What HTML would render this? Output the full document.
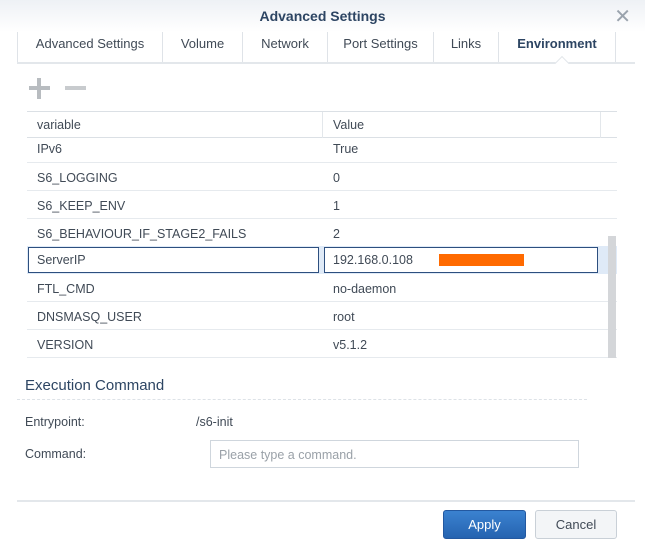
<!DOCTYPE html>
<html><head><style>
*{margin:0;padding:0;box-sizing:border-box}
body{width:645px;height:545px;background:#fff;font-family:"Liberation Sans",sans-serif;font-size:12.5px;color:#404a56;position:relative;overflow:hidden}
.abs{position:absolute}
.title{left:0;top:0;width:645px;height:32px;background:linear-gradient(#eef1f5,#fff);text-align:center;line-height:32px;font-weight:bold;font-size:14px;color:#2d4563}
.tab{top:32px;height:30px;line-height:24px;text-align:center;font-size:13px;color:#404a56;border-left:1px solid #dfe3e8}
.row{left:27px;width:590px;height:28px;border-bottom:1px solid #e6eaee}
.row span{position:absolute;top:8px}
</style></head><body>
<div class="abs title">Advanced Settings</div>
<div class="abs" style="right:14px;top:4px;font-size:20px;color:#9aa3ad">✕</div>
<div class="abs tab" style="left:17px;width:145px">Advanced Settings</div>
<div class="abs tab" style="left:162px;width:80px">Volume</div>
<div class="abs tab" style="left:242px;width:85px">Network</div>
<div class="abs tab" style="left:327px;width:106px">Port Settings</div>
<div class="abs tab" style="left:433px;width:65px">Links</div>
<div class="abs tab" style="left:498px;width:118px;border-right:1px solid #dfe3e8;font-weight:bold;color:#2d4563">Environment</div>
<div class="abs" style="left:17px;top:62px;width:618px;height:2px;background:#e3e7eb"></div>
<div class="abs" style="left:557px;top:58px;width:10px;height:10px;background:#fff;border-left:1px solid #e3e7eb;border-top:1px solid #e3e7eb;transform:rotate(45deg)"></div>
<div class="abs" style="left:29px;top:86px;width:21px;height:4px;background:#b8bcc0"></div>
<div class="abs" style="left:37px;top:78px;width:4px;height:21px;background:#b8bcc0"></div>
<div class="abs" style="left:65px;top:86px;width:21px;height:4px;background:#c8cbce"></div>
<div class="abs" style="left:27px;top:111px;width:590px;height:27px;border-top:1px solid #dbe0e5;border-bottom:1px solid #dbe0e5"></div>
<div class="abs" style="left:322px;top:112px;width:1px;height:26px;background:#e3e7eb"></div>
<div class="abs" style="left:600px;top:112px;width:1px;height:26px;background:#e3e7eb"></div>
<div class="abs" style="left:37px;top:118px">variable</div>
<div class="abs" style="left:333px;top:118px">Value</div>
<div class="abs row" style="top:138px;height:25px"><span style="left:10px;top:4px">IPv6</span><span style="left:306px;top:4px">True</span></div>
<div class="abs row" style="top:163px"><span style="left:10px">S6_LOGGING</span><span style="left:306px">0</span></div>
<div class="abs row" style="top:191px"><span style="left:10px">S6_KEEP_ENV</span><span style="left:306px">1</span></div>
<div class="abs row" style="top:219px"><span style="left:10px">S6_BEHAVIOUR_IF_STAGE2_FAILS</span><span style="left:306px">2</span></div>
<div class="abs" style="left:27px;top:246px;width:590px;height:28px;background:#dfeaf7"></div>
<div class="abs" style="left:28px;top:247px;width:291px;height:26px;border:1px solid #2d4f7f;background:#fff"></div>
<div class="abs" style="left:324px;top:247px;width:274px;height:26px;border:1px solid #2d4f7f;background:#fff"></div>
<div class="abs" style="left:37px;top:253px">ServerIP</div>
<div class="abs" style="left:333px;top:253px">192.168.0.108</div>
<div class="abs" style="left:439px;top:254px;width:85px;height:12px;background:#ff6a00"></div>
<div class="abs row" style="top:274px"><span style="left:10px">FTL_CMD</span><span style="left:306px">no-daemon</span></div>
<div class="abs row" style="top:302px"><span style="left:10px">DNSMASQ_USER</span><span style="left:306px">root</span></div>
<div class="abs row" style="top:330px"><span style="left:10px">VERSION</span><span style="left:306px">v5.1.2</span></div>
<div class="abs" style="left:608px;top:236px;width:8px;height:122px;background:#d4d6d9"></div>
<div class="abs" style="left:25px;top:377px;font-size:15px;color:#2d4563">Execution Command</div>
<div class="abs" style="left:17px;top:399px;width:570px;border-top:1px dashed #dde2e7"></div>
<div class="abs" style="left:25px;top:415px">Entrypoint:</div>
<div class="abs" style="left:196px;top:415px">/s6-init</div>
<div class="abs" style="left:25px;top:447px">Command:</div>
<div class="abs" style="left:210px;top:440px;width:369px;height:28px;border:1px solid #cfd6dd;padding:7px 8px;color:#9aa1a8">Please type a command.</div>
<div class="abs" style="left:17px;top:500px;width:618px;height:2px;background:#e3e7eb"></div>
<div class="abs" style="left:443px;top:510px;width:83px;height:29px;border-radius:3px;background:linear-gradient(#3b82d0,#2563b0);border:1px solid #2358a0;color:#fff;text-align:center;line-height:27px;font-size:13px">Apply</div>
<div class="abs" style="left:535px;top:510px;width:82px;height:29px;border-radius:3px;background:#f3f5f7;border:1px solid #c9d0d7;color:#404a56;text-align:center;line-height:27px;font-size:13px">Cancel</div>
</body></html>
